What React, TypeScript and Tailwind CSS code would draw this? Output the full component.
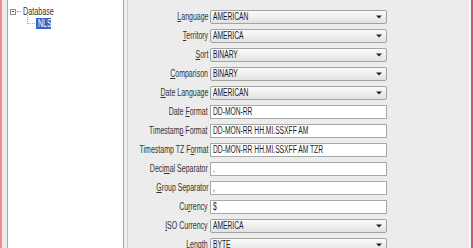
import React from 'react';

type Row = {
  pre: string;
  key: string;
  post: string;
  value: string;
  kind: 'combo' | 'text';
};

const rows: Row[] = [
  { pre: '', key: 'L', post: 'anguage', value: 'AMERICAN', kind: 'combo' },
  { pre: '', key: 'T', post: 'erritory', value: 'AMERICA', kind: 'combo' },
  { pre: '', key: 'S', post: 'ort', value: 'BINARY', kind: 'combo' },
  { pre: '', key: 'C', post: 'omparison', value: 'BINARY', kind: 'combo' },
  { pre: '', key: 'D', post: 'ate Language', value: 'AMERICAN', kind: 'combo' },
  { pre: 'Date ', key: 'F', post: 'ormat', value: 'DD-MON-RR', kind: 'text' },
  { pre: 'Timestam', key: 'p', post: ' Format', value: 'DD-MON-RR HH.MI.SSXFF AM', kind: 'text' },
  { pre: 'Timestamp TZ F', key: 'o', post: 'rmat', value: 'DD-MON-RR HH.MI.SSXFF AM TZR', kind: 'text' },
  { pre: 'Deci', key: 'm', post: 'al Separator', value: '.', kind: 'text' },
  { pre: '', key: 'G', post: 'roup Separator', value: ',', kind: 'text' },
  { pre: 'Cu', key: 'r', post: 'rency', value: '$', kind: 'text' },
  { pre: '', key: 'I', post: 'SO Currency', value: 'AMERICA', kind: 'combo' },
  { pre: 'Len', key: 'g', post: 'th', value: 'BYTE', kind: 'combo' },
];

// the screenshot is squeezed sideways, so text is narrowed to match
const Value: React.FC<{ text: string }> = ({ text }) => (
  <span className="inline-block shrink-0 origin-left scale-x-[0.67] whitespace-pre text-[10px] leading-none text-[#1c1c1c]">
    {text}
  </span>
);

const Field: React.FC<{ row: Row }> = ({ row }) => {
  if (row.kind === 'combo') {
    return (
      <div className="relative h-[14px] flex items-center overflow-hidden rounded-[2px] border border-[#a3a3a3] bg-gradient-to-b from-[#fbfbfb] to-[#e2e2e2] pl-[2px] pr-[4px]">
        <div className="flex-1 min-w-0 flex">
          <Value text={row.value} />
        </div>
        <svg width="6" height="4" viewBox="0 0 6 4" className="shrink-0">
          <path d="M0 0.5 H6 L3 3.5 Z" fill="#222" />
        </svg>
      </div>
    );
  }
  return (
    <div className="h-[14px] flex items-center overflow-hidden border border-[#a8a8a8] bg-white pl-[2px]">
      <Value text={row.value} />
    </div>
  );
};

const App: React.FC = () => {
  return (
    <div className="w-[474px] h-[248px] flex overflow-hidden bg-[#ececec] font-['Liberation_Sans',sans-serif]">
      <div className="w-[2px] bg-[#ef8d90]" />
      <div className="w-[5px]" />

      {/* navigator tree */}
      <div className="w-[117px] bg-white border-x border-[#a9a9a9] pt-[8px] pl-[2px]">
        <div className="flex items-center h-[7px]">
          <span className="w-[6px] h-[6px] border border-[#8a8a8a] flex items-center justify-center">
            <span className="w-[2px] h-px bg-[#333]" />
          </span>
          <span className="w-[4px] border-t border-dotted border-[#999] ml-px" />
          <span className="ml-[2px] inline-block origin-left scale-x-[0.72] text-[10px] leading-none text-[#333]">Database</span>
        </div>
        <div className="flex items-start pl-[17px]">
          <span className="w-[8px] h-[9px] border-l border-b border-dotted border-[#aaa]" />
          <span className="ml-px mt-[3px] w-[15px] h-[11px] bg-[#3468c4] flex items-center pl-[2px] overflow-hidden">
            <span className="inline-block shrink-0 origin-left scale-x-[0.7] text-white text-[10px] leading-none">NLS</span>
          </span>
        </div>
      </div>

      <div className="w-[3px]" />
      <div className="w-px bg-[#cfcfcf]" />

      {/* NLS preferences */}
      <div className="w-[341px] pt-[10px]">
        <div className="grid grid-cols-[80px_177px] gap-x-[2px] gap-y-[5px]">
          {rows.map((row, i) => (
            <React.Fragment key={i}>
              <div className="h-[14px] flex items-center justify-end">
                <span className="inline-block shrink-0 origin-right scale-x-[0.7] whitespace-pre text-[10px] leading-none text-[#333]">
                  {row.pre}
                  <u>{row.key}</u>
                  {row.post}
                </span>
              </div>
              <Field row={row} />
            </React.Fragment>
          ))}
        </div>
      </div>

      <div className="w-[2px] bg-[#f6f6f6]" />
      <div className="w-[2px] bg-[#cc5865]" />
      <div className="w-px bg-[#f2d6d8]" />
    </div>
  );
};

export default App;
